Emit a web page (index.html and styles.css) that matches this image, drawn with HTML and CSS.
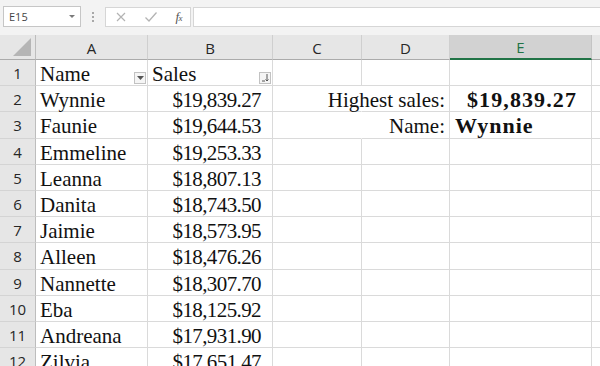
FILE: index.html
```html
<!DOCTYPE html>
<html>
<head>
<meta charset="utf-8">
<link rel="stylesheet" href="styles.css">
</head>
<body>
<div class="app">
  <div class="toolbar">
    <div class="namebox">
      <span class="nb-text">E15</span>
      <span class="nb-arrow"></span>
    </div>
    <div class="dots"><i></i><i></i><i></i></div>
    <div class="fxbox">
      <svg class="ico" width="12" height="12" viewBox="0 0 12 12"><path d="M2 2 L10 10 M10 2 L2 10" stroke="#b3b3b3" stroke-width="1.2" fill="none"/></svg>
      <svg class="ico" width="14" height="12" viewBox="0 0 14 12"><path d="M1.5 6.5 L5 10 L12.5 1.5" stroke="#b3b3b3" stroke-width="1.3" fill="none"/></svg>
      <span class="fx">f<small>x</small></span>
    </div>
    <div class="formula"></div>
  </div>
  <div class="sheet">
    <div class="ch corner"><svg width="20" height="20" viewBox="0 0 20 20"><path d="M19 1 L19 19 L1 19 Z" fill="#b5b5b5"/></svg></div>
    <div class="ch">A</div>
    <div class="ch">B</div>
    <div class="ch">C</div>
    <div class="ch">D</div>
    <div class="ch sel">E</div>
    <div class="ch last"></div>

    <div class="rh">1</div>
    <div class="c txt">Name<span class="fbtn"><svg width="7" height="4" viewBox="0 0 7 4"><path d="M0 0 L7 0 L3.5 4 Z" fill="#555"/></svg></span></div>
    <div class="c txt">Sales<span class="fbtn"><svg width="9" height="8" viewBox="0 0 9 8"><path d="M6 0 L6 7 M4.5 5.5 L6 7 L7.5 5.5 M1 7 L4 7" stroke="#555" stroke-width="1" fill="none"/></svg></span></div>
    <div class="c"></div><div class="c"></div><div class="c"></div><div class="c last"></div>

    <div class="rh">2</div>
    <div class="c txt">Wynnie</div><div class="c num">$19,839.27</div>
    <div class="c noline"></div><div class="c lbl">Highest sales:</div><div class="c bnum">$19,839.27</div><div class="c last"></div>

    <div class="rh">3</div>
    <div class="c txt">Faunie</div><div class="c num">$19,644.53</div>
    <div class="c noline"></div><div class="c lbl">Name:</div><div class="c btxt">Wynnie</div><div class="c last"></div>

    <div class="rh">4</div>
    <div class="c txt">Emmeline</div><div class="c num">$19,253.33</div>
    <div class="c"></div><div class="c"></div><div class="c"></div><div class="c last"></div>

    <div class="rh">5</div>
    <div class="c txt">Leanna</div><div class="c num">$18,807.13</div>
    <div class="c"></div><div class="c"></div><div class="c"></div><div class="c last"></div>

    <div class="rh">6</div>
    <div class="c txt">Danita</div><div class="c num">$18,743.50</div>
    <div class="c"></div><div class="c"></div><div class="c"></div><div class="c last"></div>

    <div class="rh">7</div>
    <div class="c txt">Jaimie</div><div class="c num">$18,573.95</div>
    <div class="c"></div><div class="c"></div><div class="c"></div><div class="c last"></div>

    <div class="rh">8</div>
    <div class="c txt">Alleen</div><div class="c num">$18,476.26</div>
    <div class="c"></div><div class="c"></div><div class="c"></div><div class="c last"></div>

    <div class="rh">9</div>
    <div class="c txt">Nannette</div><div class="c num">$18,307.70</div>
    <div class="c"></div><div class="c"></div><div class="c"></div><div class="c last"></div>

    <div class="rh">10</div>
    <div class="c txt">Eba</div><div class="c num">$18,125.92</div>
    <div class="c"></div><div class="c"></div><div class="c"></div><div class="c last"></div>

    <div class="rh">11</div>
    <div class="c txt">Andreana</div><div class="c num">$17,931.90</div>
    <div class="c"></div><div class="c"></div><div class="c"></div><div class="c last"></div>

    <div class="rh">12</div>
    <div class="c txt">Zilvia</div><div class="c num">$17,651.47</div>
    <div class="c"></div><div class="c"></div><div class="c"></div><div class="c last"></div>
  </div>
</div>
</body>
</html>
```
FILE: styles.css
```css
* { box-sizing: border-box; }
html, body { margin: 0; padding: 0; }
body {
  width: 600px;
  height: 366px;
  overflow: hidden;
  background: #f3f3f3;
}
.app { width: 600px; }

.toolbar {
  height: 35px;
  display: flex;
  align-items: flex-start;
  padding-top: 6px;
  background: #f3f3f3;
}
.namebox {
  margin-left: 3px;
  width: 78px;
  height: 21px;
  background: #fff;
  border: 1px solid #c6c6c6;
  display: flex;
  align-items: center;
  justify-content: space-between;
  padding: 0 5px 0 5px;
}
.nb-text {
  font-family: "Open Sans", "Noto Sans", sans-serif;
  font-size: 11px;
  color: #444;
}
.nb-arrow {
  width: 0; height: 0;
  border-left: 3.5px solid transparent;
  border-right: 3.5px solid transparent;
  border-top: 3.5px solid #7a7a7a;
}
.dots {
  width: 24px;
  height: 21px;
  display: flex;
  flex-direction: column;
  align-items: center;
  justify-content: center;
  gap: 2px;
}
.dots i {
  display: block;
  width: 2px; height: 2px;
  background: #a8a8a8;
}
.fxbox {
  width: 86px;
  height: 20px;
  margin-top: 1px;
  background: #fff;
  border: 1px solid #d6d6d6;
  display: flex;
  align-items: center;
  justify-content: space-between;
  padding: 0 8px 0 9px;
}
.fx {
  font-family: "Liberation Serif", serif;
  font-style: italic;
  font-size: 13px;
  color: #555;
  letter-spacing: -0.5px;
}
.fx small { font-size: 9px; }
.formula {
  margin-left: 2px;
  flex: 1;
  height: 20px;
  margin-top: 1px;
  background: #fff;
  border: 1px solid #d6d6d6;
  border-right: none;
}

.sheet {
  display: grid;
  grid-template-columns: 36px 112px 125px 89px 88px 142px 8px;
  grid-template-rows: 25px repeat(12, 26.2px);
  background: #fff;
}
.ch {
  background: #e6e6e6;
  border-right: 1px solid #cfcfcf;
  border-bottom: 1px solid #ababab;
  display: flex;
  align-items: center;
  justify-content: center;
  font-family: "Open Sans", "Noto Sans", sans-serif;
  font-size: 15px;
  color: #262626;
  padding-top: 1px;
}
.ch.corner {
  justify-content: flex-end;
  align-items: flex-end;
  padding: 0 3px 2px 0;
  border-right: 1px solid #bdbdbd;
}
.ch.sel {
  background: #d2d2d2;
  color: #217346;
  border-bottom: 2px solid #217346;
  border-right-color: #c4c4c4;
}
.ch.last { border-right: none; }

.rh {
  background: #e6e6e6;
  border-right: 1px solid #bdbdbd;
  border-bottom: 1px solid #d4d4d4;
  display: flex;
  align-items: center;
  justify-content: center;
  font-family: "Open Sans", "Noto Sans", sans-serif;
  font-size: 15px;
  color: #262626;
  padding-top: 1px;
}

.c {
  position: relative;
  border-right: 1px solid #dadada;
  border-bottom: 1px solid #dadada;
  font-family: "Liberation Serif", "DejaVu Serif", serif;
  font-size: 21px;
  line-height: 26px;
  color: #111;
  white-space: nowrap;
  display: flex;
  align-items: flex-start;
  padding-top: 1px;
}
.c.last { border-right: none; }
.c.noline { border-right-color: transparent; }
.txt { padding-left: 4px; }
.num {
  justify-content: flex-end;
  padding-right: 11px;
  letter-spacing: -0.6px;
}
.lbl {
  justify-content: flex-end;
  padding-right: 4px;
  overflow: visible;
}
.bnum {
  justify-content: flex-end;
  padding-right: 14px;
  font-weight: bold;
  font-size: 22px;
  letter-spacing: 1.1px;
}
.btxt {
  padding-left: 5px;
  font-weight: bold;
  font-size: 22px;
  letter-spacing: 1px;
}

.fbtn {
  position: absolute;
  right: 1px;
  top: 12px;
  width: 12px;
  height: 12px;
  background: #f5f5f5;
  border: 1px solid #c2c2c2;
  display: flex;
  align-items: center;
  justify-content: center;
}
```
